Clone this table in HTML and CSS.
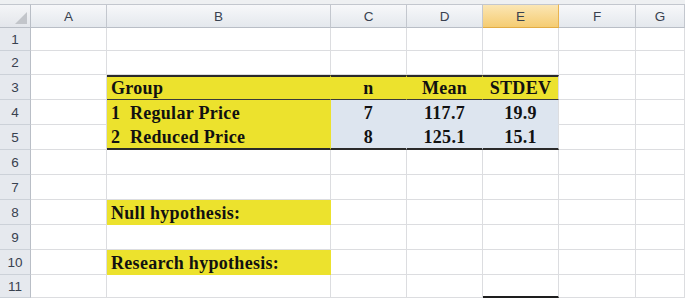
FILE: index.html
```html
<!DOCTYPE html>
<html lang="en">
<head>
<meta charset="utf-8">
<title>Sheet1</title>
<link rel="stylesheet" href="styles.css">
</head>
<body>
<div class="sheet">
  <div class="strip"></div>

  <!-- column headings -->
  <div class="corner"><svg class="corner-mark" width="12" height="12" viewBox="0 0 12 12"><polygon points="12,0 12,12 0,12" /></svg></div>
  <div class="colhead">A</div>
  <div class="colhead">B</div>
  <div class="colhead">C</div>
  <div class="colhead">D</div>
  <div class="colhead active">E</div>
  <div class="colhead">F</div>
  <div class="colhead">G</div>

  <!-- row 1 -->
  <div class="rowhead">1</div>
  <div class="c"></div><div class="c"></div><div class="c"></div><div class="c"></div><div class="c"></div><div class="c"></div><div class="c"></div>

  <!-- row 2 -->
  <div class="rowhead">2</div>
  <div class="c"></div><div class="c"></div><div class="c"></div><div class="c"></div><div class="c"></div><div class="c"></div><div class="c"></div>

  <!-- row 3: table heading -->
  <div class="rowhead">3</div>
  <div class="c"></div>
  <div class="c y lbl head-row">Group</div>
  <div class="c y num head-row">n</div>
  <div class="c y num head-row">Mean</div>
  <div class="c y num head-row edge">STDEV</div>
  <div class="c"></div><div class="c"></div>

  <!-- row 4 -->
  <div class="rowhead">4</div>
  <div class="c"></div>
  <div class="c y lbl">1  Regular Price</div>
  <div class="c b num">7</div>
  <div class="c b num">117.7</div>
  <div class="c b num edge">19.9</div>
  <div class="c"></div><div class="c"></div>

  <!-- row 5 -->
  <div class="rowhead">5</div>
  <div class="c"></div>
  <div class="c y lbl last-row">2  Reduced Price</div>
  <div class="c b num last-row">8</div>
  <div class="c b num last-row">125.1</div>
  <div class="c b num last-row edge">15.1</div>
  <div class="c"></div><div class="c"></div>

  <!-- row 6 -->
  <div class="rowhead">6</div>
  <div class="c"></div><div class="c"></div><div class="c"></div><div class="c"></div><div class="c"></div><div class="c"></div><div class="c"></div>

  <!-- row 7 -->
  <div class="rowhead">7</div>
  <div class="c"></div><div class="c"></div><div class="c"></div><div class="c"></div><div class="c"></div><div class="c"></div><div class="c"></div>

  <!-- row 8 -->
  <div class="rowhead">8</div>
  <div class="c"></div>
  <div class="c y lbl">Null hypothesis:</div>
  <div class="c"></div><div class="c"></div><div class="c"></div><div class="c"></div><div class="c"></div>

  <!-- row 9 -->
  <div class="rowhead">9</div>
  <div class="c"></div><div class="c"></div><div class="c"></div><div class="c"></div><div class="c"></div><div class="c"></div><div class="c"></div>

  <!-- row 10 -->
  <div class="rowhead">10</div>
  <div class="c"></div>
  <div class="c y lbl">Research hypothesis:</div>
  <div class="c"></div><div class="c"></div><div class="c"></div><div class="c"></div><div class="c"></div>

  <!-- row 11 -->
  <div class="rowhead">11</div>
  <div class="c"></div><div class="c"></div><div class="c"></div><div class="c"></div>
  <div class="c under"></div>
  <div class="c"></div><div class="c"></div>
</div>
</body>
</html>
```

FILE: styles.css
```css
html, body {
  margin: 0;
  padding: 0;
  background: #ffffff;
  overflow: hidden;
}

.sheet {
  display: grid;
  grid-template-columns: 31px 76px 224px 76px 76px 76px 77px 1fr;
  grid-template-rows: 4px 24px 23px 24px repeat(8, 25px) 23px;
  width: 685px;
  height: 298px;
  font-family: "Liberation Serif", "Times New Roman", serif;
  font-weight: bold;
  font-size: 18px;
  letter-spacing: 0.3px;
  color: #111111;
}

/* thin band left over from the formula bar */
.strip {
  grid-column: 1 / -1;
  background: #eef0f2;
}

/* headings */
.corner,
.colhead,
.rowhead {
  box-sizing: border-box;
  font-family: "Liberation Sans", Arial, sans-serif;
  font-weight: normal;
  font-size: 13.5px;
  letter-spacing: 0;
  color: #38414f;
  display: flex;
  align-items: center;
  justify-content: center;
}

.corner {
  position: relative;
  background: linear-gradient(#f4f5f7, #e3e6eb);
  border-top: 1px solid #c3c7ce;
  border-right: 1px solid #b9bec6;
  border-bottom: 1px solid #b9bec6;
}

.corner-mark {
  position: absolute;
  right: 3px;
  bottom: 3px;
}

.corner-mark polygon {
  fill: #c2c5ca;
}

.colhead {
  background: linear-gradient(#f7f8fa, #e4e8ed);
  border-top: 1px solid #c3c7ce;
  border-right: 1px solid #c3c7ce;
  border-bottom: 1px solid #b9bec6;
  padding-top: 1px;
}

.colhead.active {
  background: linear-gradient(#fbe6b4, #f5cc72);
  border-right-color: #e9b44f;
  border-bottom-color: #e2ac45;
}

.rowhead {
  background: #e6e9ee;
  border-right: 1px solid #b9bec6;
  border-bottom: 1px solid #ccd1d8;
}

/* cells */
.c {
  box-sizing: border-box;
  background: #ffffff;
  border-right: 1px solid #dcdde0;
  border-bottom: 1px solid #dcdde0;
  display: flex;
  align-items: flex-end;
  line-height: 21px;
  white-space: pre;
  overflow: hidden;
}

.y {
  background: #ece22d;
  border-right-color: #ece22d;
  border-bottom-color: #ece22d;
}

.b {
  background: #dde5ef;
  border-right-color: #dde5ef;
  border-bottom-color: #dde5ef;
}

.edge {
  border-right-color: #dcdde0;
}

.lbl {
  padding-left: 4px;
}

.num {
  justify-content: center;
}

/* table rules */
.head-row {
  border-top: 2px solid #2a2a2a;
  border-bottom: 1px solid #3a3a3a;
}

.last-row {
  border-bottom: 2px solid #2a2a2a;
}

.under {
  border-bottom: 2px solid #1e1e1e;
}
```
